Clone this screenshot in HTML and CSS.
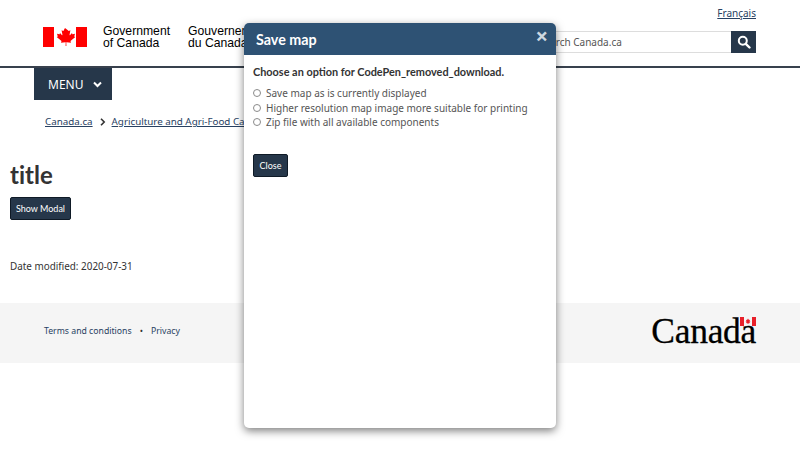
FILE: index.html
```html
<!DOCTYPE html>
<html lang="en">
<head>
    <meta charset="UTF-8">
    <title>title</title>
    <link rel="stylesheet" href="styles.css">
</head>
<body>
    <header class="site-header">
        <div class="lang-row"><a href="#">Français</a></div>
        <div class="brand-row">
            <svg class="flag" width="44" height="20" viewBox="0 0 44 20">
                <rect x="0" y="0" width="11" height="20" fill="#f00"/>
                <rect x="33" y="0" width="11" height="20" fill="#f00"/>
                <path fill="#f00" d="M22 1l-1.500 2.700c-.2.300-.5.300-.8.100l-1.100-.6.800 4.300c.2.800-.4.800-.6.500l-1.800-2.100-.3 1.100c0 .2-.2.300-.4.200l-2.300-.5.600 2.200c.1.500.2.700-.1.800l-.8.400 4.500 3.700c.2.200.3.400.2.700l-.4 1.300 4.400-.5c.2 0 .3.100.3.300l-.1 3.400h.8l-.1-3.400c0-.2.100-.3.300-.3l4.400.5-.4-1.300c-.1-.3 0-.5.200-.7l4.500-3.700-.8-.4c-.3-.1-.2-.3-.1-.8l.6-2.200-2.300.5c-.2.100-.4 0-.4-.2l-.3-1.100-1.800 2.100c-.2.300-.8.300-.6-.5l.8-4.300-1.100.6c-.3.200-.6.200-.8-.1z"/>
            </svg>
            <div class="wordmark">Government<br>of Canada</div>
            <div class="wordmark wordmark-fr">Gouvernement<br>du Canada</div>
            <form class="search">
                <input class="search-input" type="text" placeholder="Search Canada.ca">
                <button class="search-btn" type="button" aria-label="Search">
                    <svg width="14" height="14" viewBox="0 0 14 14"><circle cx="5.800" cy="5.800" r="4" fill="none" stroke="#fff" stroke-width="2"/><path d="M8.800 8.800l3.700 3.700" stroke="#fff" stroke-width="2.400" stroke-linecap="round"/></svg>
                </button>
            </form>
        </div>
    </header>

    <nav class="menu-row">
        <button class="menu-btn" type="button">MENU
            <svg width="9" height="7" viewBox="0 0 9 7"><path d="M1 1.500l3.500 3.500 3.500-3.500" fill="none" stroke="#fff" stroke-width="2"/></svg>
        </button>
    </nav>

    <div class="breadcrumb">
        <a href="#">Canada.ca</a>
        <svg class="crumb-arrow" width="6" height="8" viewBox="0 0 6 8"><path d="M1 .8l3.200 3.200-3.200 3.200" fill="none" stroke="#333" stroke-width="1.600"/></svg>
        <a href="#">Agriculture and Agri-Food Canada</a>
    </div>

    <main class="content">
        <h1>title</h1>
        <button class="btn-dark" type="button">Show Modal</button>
        <p class="modified">Date modified: 2020-07-31</p>
    </main>

    <footer class="site-footer">
        <div class="footer-links">
            <a href="#">Terms and conditions</a>
            <span class="dot">•</span>
            <a href="#">Privacy</a>
        </div>
        <div class="canada-mark">Canada<svg class="mini-flag" width="16" height="9" viewBox="0 0 16 9"><rect width="4" height="9" fill="#e8202a"/><rect x="12" width="4" height="9" fill="#e8202a"/><path d="M8 1.500l1 1.500 1-.3-.5 2 1-.2-1.500 2h-2l-1.500-2 1 .2-.5-2 1 .3z" fill="#e8202a"/></svg></div>
    </footer>

    <div class="modal">
        <div class="modal-head">
            <h2>Save map</h2>
            <span class="modal-x">×</span>
        </div>
        <div class="modal-body">
            <p class="modal-q">Choose an option for CodePen_removed_download.</p>
            <label class="opt"><input type="radio" name="opt">Save map as is currently displayed</label>
            <label class="opt"><input type="radio" name="opt">Higher resolution map image more suitable for printing</label>
            <label class="opt"><input type="radio" name="opt">Zip file with all available components</label>
            <button class="btn-dark btn-close" type="button">Close</button>
        </div>
    </div>
</body>
</html>
```

FILE: styles.css
```css
html, body {
    height: 450px;
    overflow: hidden;
}
body {
    margin: 0;
    background: #fff;
    color: #333;
    font-family: "Noto Sans", sans-serif;
    font-size: 10px;
}
a {
    color: #284162;
}
.site-header {
    height: 66px;
    border-bottom: 2px solid #38414d;
    padding: 0 44px 0 43px;
}
.lang-row {
    height: 27px;
    padding-top: 6px;
    box-sizing: border-box;
    text-align: right;
    font-size: 10px;
    line-height: 15px;
}
.brand-row {
    display: flex;
    align-items: flex-start;
}
.flag {
    flex: none;
    margin-right: 16px;
}
.wordmark {
    width: 85px;
    font-family: "Liberation Sans", sans-serif;
    font-size: 12.200px;
    line-height: 12px;
    color: #000;
    margin-top: -2px;
}
.wordmark-fr {
    white-space: nowrap;
}
.search {
    display: flex;
    margin-left: auto;
    margin-top: 4px;
}
.search-input {
    width: 200px;
    height: 22px;
    box-sizing: border-box;
    border: 1px solid #ddd;
    border-right: none;
    padding: 0 7px;
    font-family: "Noto Sans", sans-serif;
    font-size: 10px;
}
.search-input::placeholder {
    color: #555;
}
.search-btn {
    width: 25px;
    height: 22px;
    padding: 0;
    border: none;
    background: #26374a;
    display: flex;
    align-items: center;
    justify-content: center;
}
.menu-row {
    padding-left: 34px;
}
.menu-btn {
    width: 78px;
    height: 32px;
    padding: 0 0 0 14px;
    border: none;
    background: #26374a;
    color: #fff;
    font-family: "Noto Sans", sans-serif;
    font-size: 12px;
    display: flex;
    align-items: center;
    gap: 10px;
}
.breadcrumb {
    display: flex;
    align-items: center;
    gap: 6px;
    height: 16px;
    padding: 14px 0 0 45px;
    line-height: 16px;
    font-size: 9.800px;
    white-space: nowrap;
}
.crumb-arrow {
    flex: none;
    margin-left: 1px;
}
.content {
    padding: 0 10px;
}
.content h1 {
    margin: 29px 0 0;
    font-family: Lato, sans-serif;
    font-size: 24px;
    line-height: 32px;
    font-variant-ligatures: none;
    color: #333;
}
.btn-dark {
    display: block;
    background: #26374a;
    color: #fff;
    border: 1px solid #0f1a26;
    border-radius: 2px;
    padding: 0;
    font-family: Lato, sans-serif;
    font-size: 9px;
}
.content .btn-dark {
    width: 61px;
    height: 23px;
    margin-top: 6px;
}
.modified {
    margin: 39px 0 0;
    font-size: 9.900px;
    line-height: 15px;
}
.site-footer {
    margin-top: 29px;
    height: 60px;
    box-sizing: border-box;
    background: #f5f5f5;
    padding: 0 44px;
    display: flex;
    align-items: center;
    justify-content: space-between;
}
.footer-links {
    display: flex;
    gap: 8px;
    font-size: 8.700px;
    margin-top: -4px;
}
.footer-links a {
    text-decoration: none;
}
.canada-mark {
    position: relative;
    font-family: "Liberation Serif", serif;
    font-size: 35.500px;
    line-height: 34px;
    color: #000;
    letter-spacing: -0.3px;
    -webkit-text-stroke: .3px #000;
    margin-top: -4px;
}
.mini-flag {
    position: absolute;
    right: 0;
    top: 3px;
}
.modal {
    position: absolute;
    left: 244px;
    top: 23px;
    width: 312px;
    height: 405px;
    background: #fff;
    border-radius: 5px;
    box-shadow: 0 3px 9px rgba(0, 0, 0, .5);
}
.modal-head {
    height: 32px;
    background: #2e5274;
    border-radius: 5px 5px 0 0;
    display: flex;
    align-items: center;
    justify-content: space-between;
    padding: 0 8px 0 12px;
    color: #fff;
}
.modal-head h2 {
    margin: 0;
    font-family: Lato, sans-serif;
    font-size: 14.300px;
    font-weight: 700;
}
.modal-x {
    font-family: "Noto Sans", sans-serif;
    font-size: 22px;
    font-weight: 700;
    line-height: 24px;
    color: #cfd8e0;
    margin-top: -9px;
}
.modal-body {
    padding: 9px 9px;
}
.modal-q {
    margin: 0 0 7px;
    font-family: Lato, sans-serif;
    font-weight: 700;
    font-size: 10.900px;
    line-height: 15px;
}
.opt {
    display: flex;
    align-items: center;
    height: 14.500px;
    color: #555;
    white-space: nowrap;
}
.opt input {
    appearance: none;
    width: 8px;
    height: 8px;
    margin: 0 5px 0 0;
    border: 1px solid #8a8a8a;
    border-radius: 50%;
    background: #fff;
}
.btn-close {
    width: 35px;
    height: 23px;
    margin-top: 24px;
}
```
